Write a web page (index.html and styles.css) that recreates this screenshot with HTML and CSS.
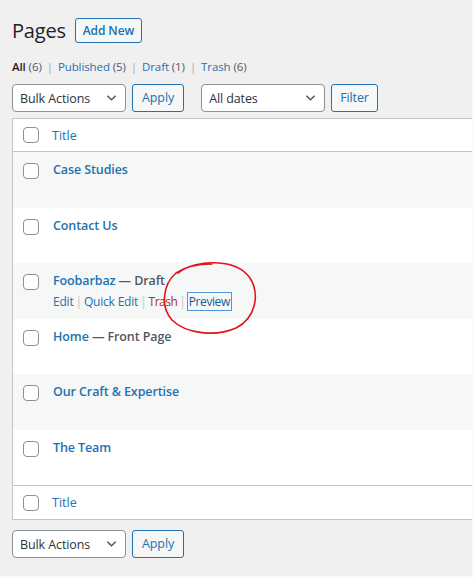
FILE: index.html
```html
<!DOCTYPE html>
<html>
<head>
<meta charset="utf-8">
<link rel="stylesheet" href="styles.css">
</head>
<body>
<div class="wrap">
  <div class="title-row">
    <h1 class="page-title">Pages</h1>
    <a class="btn-outline">Add New</a>
  </div>
  <ul class="subsubsub">
    <li><span class="current">All</span> <span class="count">(6)</span></li>
    <li class="sep">|</li>
    <li><a>Published</a> <span class="count">(5)</span></li>
    <li class="sep">|</li>
    <li><a>Draft</a> <span class="count">(1)</span></li>
    <li class="sep">|</li>
    <li><a>Trash</a> <span class="count">(6)</span></li>
  </ul>
  <div class="tablenav">
    <div class="select bulk"><span>Bulk Actions</span><svg viewBox="0 0 12 8" class="chev"><path d="M1.5 1.5 L6 6 L10.5 1.5" fill="none" stroke="#50575e" stroke-width="1.6"/></svg></div>
    <a class="button">Apply</a>
    <div class="select dates"><span>All dates</span><svg viewBox="0 0 12 8" class="chev"><path d="M1.5 1.5 L6 6 L10.5 1.5" fill="none" stroke="#50575e" stroke-width="1.6"/></svg></div>
    <a class="button filter">Filter</a>
  </div>
  <div class="table">
    <div class="head"><span class="cb"></span><a class="col-title">Title</a></div>
    <div class="row alt"><span class="cb"></span><div class="cell"><a class="row-title">Case Studies</a></div></div>
    <div class="row"><span class="cb"></span><div class="cell"><a class="row-title">Contact Us</a></div></div>
    <div class="row alt"><span class="cb"></span><div class="cell"><div><a class="row-title">Foobarbaz</a><span class="state"> — Draft</span></div>
      <div class="actions"><a>Edit</a><span class="asep">|</span><a>Quick Edit</a><span class="asep">|</span><a class="trash">Trash</a><span class="asep">|</span><a class="focus">Preview</a></div></div></div>
    <div class="row"><span class="cb"></span><div class="cell"><a class="row-title">Home</a><span class="state"> — Front Page</span></div></div>
    <div class="row alt"><span class="cb"></span><div class="cell"><a class="row-title">Our Craft &amp; Expertise</a></div></div>
    <div class="row"><span class="cb"></span><div class="cell"><a class="row-title">The Team</a></div></div>
    <div class="head foot"><span class="cb"></span><a class="col-title">Title</a></div>
  </div>
  <div class="tablenav bottom">
    <div class="select bulk"><span>Bulk Actions</span><svg viewBox="0 0 12 8" class="chev"><path d="M1.5 1.5 L6 6 L10.5 1.5" fill="none" stroke="#50575e" stroke-width="1.6"/></svg></div>
    <a class="button">Apply</a>
  </div>
  <svg class="circle" width="474" height="578" viewBox="0 0 474 578">
    <path d="M178 273 C196 259 236 258 250 278 C260 294 256 318 236 328 C216 337 186 334 172 320 C160 307 163 284 176 273 C186 266 198 264 212 264" fill="none" stroke="#e0141e" stroke-width="1.6" stroke-linecap="round"/>
  </svg>
</div>
</body>
</html>
```

FILE: styles.css
```css
html, body { margin: 0; padding: 0; background: #fbfbfb; }
body { font-family: "Open Sans", "Noto Sans", sans-serif; color: #3c434a; }
.wrap {
  position: relative;
  width: 472px;
  height: 576px;
  background: #f0f0f1;
  overflow: hidden;
  padding-left: 12px;
  box-sizing: border-box;
}
a { color: #2271b1; text-decoration: none; }
.title-row { display: flex; align-items: center; gap: 9px; padding-top: 18px; height: 25px; }
.page-title { margin: 0; font-size: 20px; font-weight: 400; color: #1d2327; line-height: 25px; letter-spacing: -0.2px; }
.btn-outline {
  display: inline-block; box-sizing: border-box; height: 25px; line-height: 23px;
  padding: 0 7px; border: 1px solid #2271b1; border-radius: 3px;
  font-size: 12px; font-weight: 600; background: #f6f7f7; letter-spacing: -0.1px;
}
.subsubsub { list-style: none; margin: 0; padding: 0; display: flex; gap: 5px; margin-top: 16px; font-size: 11.5px; line-height: 16px; height: 16px; letter-spacing: -0.1px; }
.subsubsub .current { font-weight: 600; color: #1d2327; }
.subsubsub .count { color: #50575e; }
.subsubsub .sep { color: #a7aaad; }
.tablenav { display: flex; align-items: center; gap: 6px; margin-top: 9px; height: 28px; }
.select {
  box-sizing: border-box; height: 28px; border: 1px solid #8c8f94; border-radius: 4px; background: #fff;
  display: flex; align-items: center; justify-content: space-between; padding: 0 8px 0 7px;
  font-size: 12.5px; color: #2c3338; letter-spacing: -0.1px;
}
.select.bulk { width: 114px; }
.select.dates { width: 124px; margin-left: 11px; }
.chev { width: 11px; height: 8px; }
.button {
  box-sizing: border-box; height: 28px; line-height: 26px; padding: 0 9px;
  border: 1px solid #2271b1; border-radius: 3px; background: #f6f7f7; font-size: 12.5px; letter-spacing: -0.1px;
}
.button.filter { padding: 0 8px; }
.table {
  margin-top: 6px; width: 480px; border: 1px solid #c3c4c7; background: #fff;
}
.head { display: flex; align-items: center; height: 32px; border-bottom: 1px solid #c3c4c7; }
.head.foot { border-bottom: 0; border-top: 1px solid #c3c4c7; height: 33px; }
.cb {
  flex: none; box-sizing: border-box; width: 16px; height: 16px; border: 1px solid #8c8f94; border-radius: 4px;
  background: #fff; margin-left: 10px;
}
.col-title { margin-left: 13px; font-size: 12.5px; }
.row { display: flex; align-items: flex-start; height: 55.5px; box-sizing: border-box; padding-top: 9px; }
.row.alt { background: #f6f7f7; }
.row .cb { margin-top: 2px; }
.cell { margin-left: 14px; font-size: 12.5px; line-height: 17px; letter-spacing: -0.1px; }
.row-title { font-weight: 600; }
.state { font-weight: 600; color: #50575e; }
.actions { margin-top: 4px; font-size: 12px; display: flex; align-items: center; letter-spacing: -0.2px; }
.actions .asep { color: #c3c4c7; margin: 0 2px; }
.actions .trash { color: #b32d2e; letter-spacing: -0.5px; }
.actions .focus { color: #135e96; box-shadow: 0 0 0 1px #4f94d4; padding: 0 1px; letter-spacing: -0.4px; }
.tablenav.bottom { margin-top: 10px; }
.circle { position: absolute; left: 0; top: 0; pointer-events: none; }
```
